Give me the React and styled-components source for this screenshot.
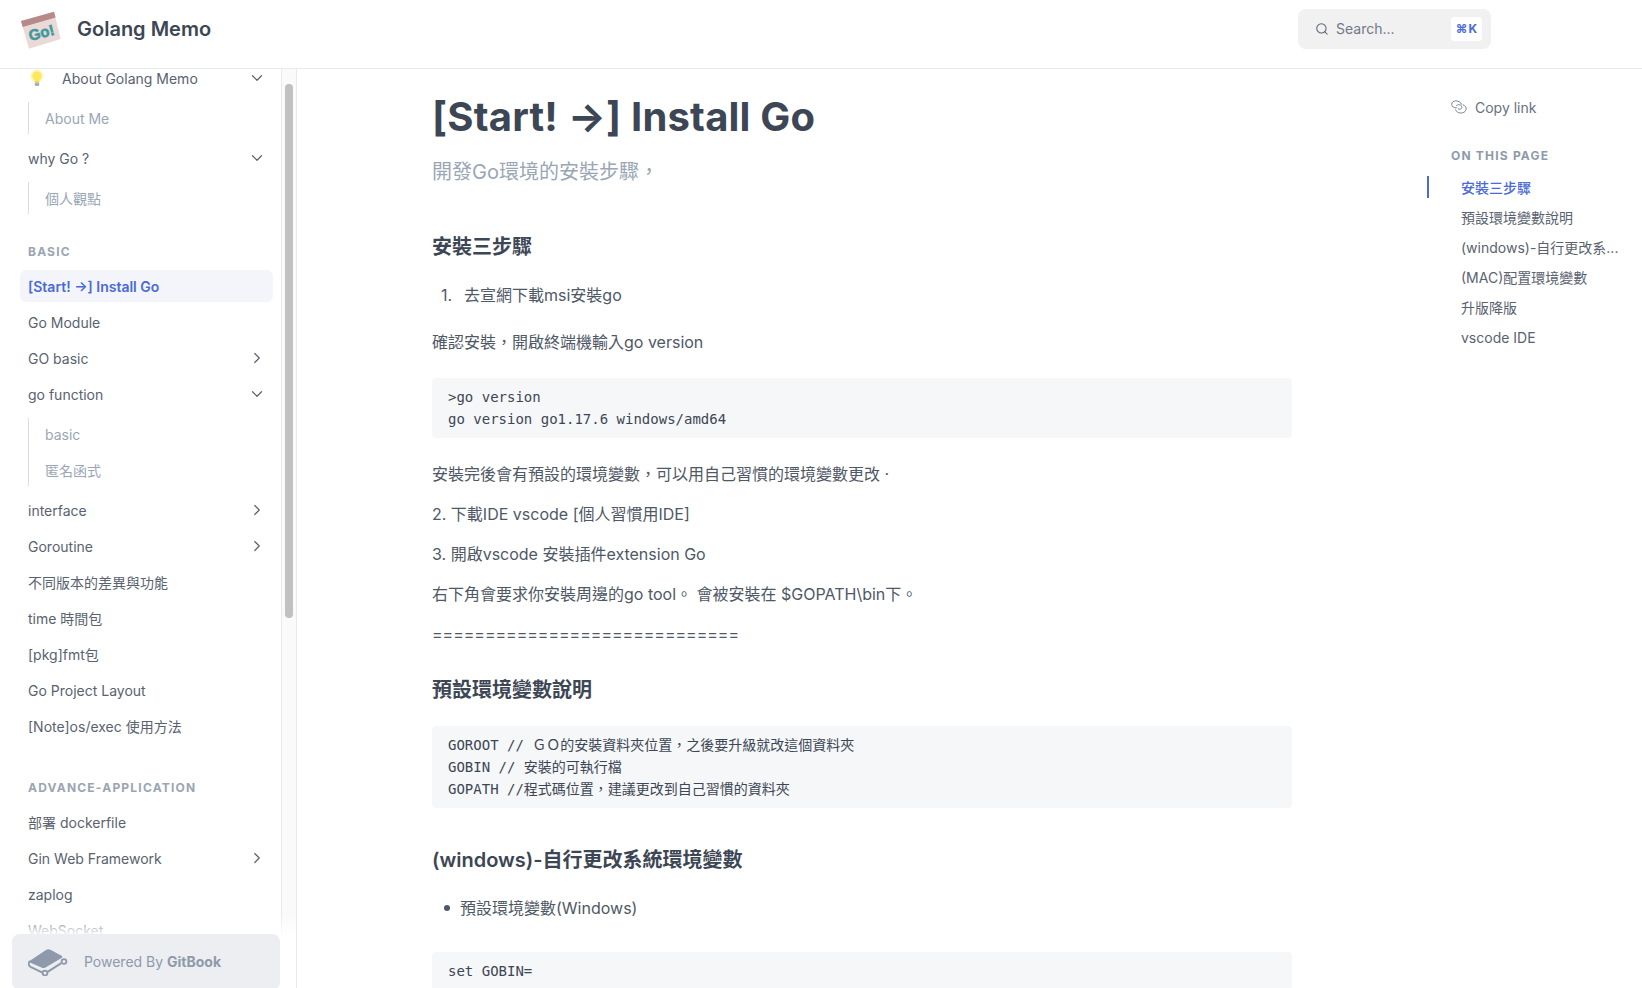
import React from 'react';
import styled, { createGlobalStyle } from 'styled-components';
import { ChevronDown, ChevronRight, Search as SearchIcon } from 'lucide-react';

const SANS = `Inter, "Noto Sans CJK TC", sans-serif`;
const MONO = `"DejaVu Sans Mono", "Noto Sans CJK TC", monospace`;

const Global = createGlobalStyle`
  html, body { margin: 0; height: 100%; overflow: hidden; background: #fff; }
  body { font-family: ${SANS}; color: #4f5866; }
  #root { height: 100%; }
`;

const Page = styled.div`
  display: flex;
  flex-direction: column;
  height: 988px;
  overflow: hidden;
`;

const Header = styled.header`
  flex: none;
  box-sizing: border-box;
  height: 69px;
  display: flex;
  align-items: center;
  padding: 0 151px 11px 20px;
  border-bottom: 1px solid #e6e9ef;
`;
const LogoBox = styled.svg`
  width: 41px;
  height: 40px;
  flex: none;
  overflow: visible;
`;
const SiteTitle = styled.div`
  margin-left: 16px;
  font-size: 20px;
  font-weight: 600;
  color: #3d4654;
`;
const SearchBox = styled.div`
  margin-left: auto;
  box-sizing: border-box;
  width: 193px;
  height: 40px;
  border-radius: 8px;
  background: #f1f1f2;
  display: flex;
  align-items: center;
  padding: 0 9px 0 17px;
  color: #6f7886;
  font-size: 14px;
`;
const SearchLabel = styled.span`
  margin-left: 7px;
  flex: 1;
`;
const Kbd = styled.span`
  width: 31px;
  height: 24px;
  border-radius: 4px;
  background: #fff;
  color: #4a6ad8;
  font-size: 12px;
  font-weight: 700;
  display: flex;
  align-items: center;
  justify-content: center;
  gap: 1px;
`;

const Body = styled.div`
  flex: 1;
  display: flex;
  min-height: 0;
`;

const Sidebar = styled.aside`
  position: relative;
  flex: none;
  width: 297px;
  display: flex;
  overflow: hidden;
  border-right: 1px solid #e6e9ef;
  box-sizing: border-box;
`;
const Nav = styled.nav`
  flex: none;
  box-sizing: border-box;
  width: 282px;
  padding: 0 8px 0 20px;
  border-right: 1px solid #e6e9ef;
  margin-top: -7px;
`;
const Track = styled.div`
  flex: 1;
  background: #fafafa;
  padding: 15px 3px 0;
`;
const Thumb = styled.div`
  height: 534px;
  border-radius: 4px;
  background: #c1c1c1;
`;
const Row = styled.div`
  height: 32px;
  box-sizing: border-box;
  border-radius: 6px;
  padding: 0 8px;
  margin-bottom: 4px;
  display: flex;
  align-items: center;
  font-size: 14px;
  color: ${p => (p.$active ? '#4a6ad8' : '#5a6270')};
  font-weight: ${p => (p.$active ? 600 : 400)};
  background: ${p => (p.$active ? '#f4f5fb' : 'transparent')};
`;
const RowLabel = styled.span`
  flex: 1;
  white-space: nowrap;
`;
const Chevron = styled.span`
  display: flex;
  margin-right: -1px;
  color: #5a6270;
`;
const Bulb = styled.svg`
  width: 16px;
  height: 18px;
  margin: 0 17px 0 1px;
  flex: none;
  overflow: visible;
`;
const Group = styled.div`
  margin: 8px 0 8px 8px;
  border-left: 1px solid #d6dde7;
  padding-left: 8px;
`;
const SubRow = styled(Row)`
  color: #9aa6b6;
  &:last-child { margin-bottom: 0; }
`;
const Section = styled.div`
  padding-bottom: 4px;
  &:first-child { padding-bottom: 0; }
`;
const SectionTitle = styled.div`
  margin: 28px 0 9px 8px;
  height: 19px;
  line-height: 19px;
  font-size: 12px;
  font-weight: 700;
  letter-spacing: 1.2px;
  color: #9aa5b4;
`;
const FooterFade = styled.div`
  position: absolute;
  left: 0;
  right: 0;
  bottom: 0;
  height: 74px;
  background: linear-gradient(to bottom, rgba(255,255,255,0), rgba(255,255,255,.9) 20px, #fff 30px);
  pointer-events: none;
`;
const Powered = styled.div`
  position: absolute;
  left: 12px;
  width: 268px;
  top: 20px;
  height: 56px;
  box-sizing: border-box;
  border-radius: 8px;
  background: #eceef1;
  display: flex;
  align-items: flex-start;
  padding: 14px 0 0 16px;
  color: #8e9aab;
  font-size: 14px;
`;
const BookIcon = styled.svg`
  width: 40px;
  height: 28px;
  flex: none;
`;
const PoweredText = styled.span`
  margin: 5px 0 0 16px;
  b { font-weight: 700; }
`;

const Main = styled.main`
  flex: 1;
  display: flex;
  min-width: 0;
  overflow: hidden;
`;
const Article = styled.article`
  flex: none;
  width: 860px;
  margin-left: 135px;
`;
const H1 = styled.h1`
  margin: 24px 0 0;
  font-size: 40px;
  line-height: 48px;
  font-weight: 700;
  letter-spacing: 0.2px;
  color: #3d4654;
`;
const Lead = styled.p`
  margin: 19px 0 0;
  font-size: 20px;
  line-height: 24px;
  color: #9aa6b6;
`;
const H2 = styled.h2`
  margin: ${p => p.$top}px 0 0;
  font-size: 20px;
  line-height: 32px;
  font-weight: 600;
  color: #3d4654;
`;
const P = styled.p`
  margin: ${p => p.$top ?? 16}px 0 0;
  font-size: 16px;
  line-height: 24px;
  color: #4f5866;
`;
const List = styled.div`
  margin: ${p => p.$top}px 0 0;
  font-size: 16px;
  line-height: 24px;
  color: #4f5866;
  display: flex;
  align-items: center;
`;
const NumberMark = styled.span`
  width: 32px;
  padding-left: 9px;
  box-sizing: border-box;
  flex: none;
`;
const Dot = styled.span`
  width: 6px;
  height: 6px;
  border-radius: 50%;
  background: #4f5866;
  margin: 0 10px 0 12px;
  flex: none;
`;
const Code = styled.pre`
  margin: ${p => p.$top}px 0 0;
  padding: 8px 16px;
  border-radius: 4px;
  background: #f5f7f9;
  font-family: ${MONO};
  font-size: 14px;
  line-height: 22px;
  color: #3d4654;
  white-space: pre;
  overflow: hidden;
`;

const Toc = styled.aside`
  flex: none;
  margin-left: 135px;
  width: 215px;
  padding-top: 27px;
`;
const CopyLink = styled.div`
  margin-left: 24px;
  display: flex;
  align-items: center;
  height: 22px;
  font-size: 14px;
  color: #68717f;
`;
const LinkIcon = styled.svg`
  width: 16px;
  height: 14px;
  margin-right: 8px;
  flex: none;
`;
const TocTitle = styled.div`
  margin: 28px 0 6px 24px;
  height: 20px;
  line-height: 20px;
  font-size: 12px;
  font-weight: 700;
  letter-spacing: 1.2px;
  color: #8e9aab;
`;
const TocItem = styled.div`
  box-sizing: border-box;
  height: 30px;
  display: flex;
  align-items: center;
  padding-left: 34px;
  font-size: 14px;
  color: ${p => (p.$active ? '#4a6ad8' : '#5a6270')};
  font-weight: ${p => (p.$active ? 500 : 400)};
  position: relative;
  &::before {
    content: '';
    display: ${p => (p.$active ? 'block' : 'none')};
    position: absolute;
    left: 0;
    top: 4px;
    bottom: 4px;
    width: 2px;
    background: #4a6ad8;
  }
`;
const TocText = styled.span`
  width: 175px;
  white-space: nowrap;
`;

const Logo = () => (
  <LogoBox viewBox="0 0 41 40" aria-hidden="true">
    <polygon points="1,12 34,2.7 40.7,30 9,39.7" fill="#ead9d6" />
    <polygon points="1,12 34,2.7 35.6,8.6 2.7,18" fill="#b58a88" />
    <text x="21.5" y="29" textAnchor="middle" fontFamily="Liberation Sans, sans-serif" fontSize="15" fontWeight="700" fill="#3f9a9c" stroke="#3f9a9c" strokeWidth=".6" transform="rotate(-15 21 24)">Go!</text>
  </LogoBox>
);

const BulbIcon = () => (
  <Bulb viewBox="0 -1 16 18" aria-hidden="true">
    <circle cx="8" cy="6" r="6.5" fill="#fdf6b8" />
    <circle cx="8" cy="6" r="4.6" fill="#fbe85c" />
    <rect x="5.6" y="10.5" width="4.8" height="2" fill="#f3d94a" />
    <rect x="5.8" y="12.5" width="4.4" height="3.5" rx="1" fill="#a9adb3" />
  </Bulb>
);

const Book = () => (
  <BookIcon viewBox="0 0 40 28" aria-hidden="true">
    <path d="M1.5 13 L18 2 Q20 .6 22.5 1.8 L34 8 Q35 9 33.5 10 L17.5 19.5 Q15.5 20.5 13.5 19.5 L2 14.5Z" fill="#8e9aab" />
    <path d="M1.6 13.5 Q-.6 17 2.5 18.8 L14 24.4" fill="none" stroke="#8e9aab" strokeWidth="2" strokeLinecap="round" />
    <path d="M20.4 23.4 L32.5 15.6" fill="none" stroke="#8e9aab" strokeWidth="2" strokeLinecap="round" />
    <circle cx="17" cy="25" r="2.4" fill="none" stroke="#8e9aab" strokeWidth="1.8" />
    <circle cx="36" cy="13.5" r="2.4" fill="none" stroke="#8e9aab" strokeWidth="1.8" />
  </BookIcon>
);

const Link = () => (
  <LinkIcon viewBox="0 0 16 14" aria-hidden="true" fill="none" stroke="#7b8594" strokeWidth="1" strokeLinecap="round">
    <path d="M5.5 7.8 C3 8.3 .8 6.6 .7 4.4 C.6 2.2 2.4 .9 4.6 .9 C7.4 .9 10 2.2 10.6 4.2" />
    <path d="M5.6 5.4 C8 3.6 11 5 10.8 7.4 C10.6 9.4 8.4 9.8 7.2 8.8" />
    <path d="M12.2 4.8 C14.4 5.4 15.6 7.6 15 9.8 C14.4 12 12 13.2 9.4 13 C7 12.8 5 11.6 4.6 9.8" />
  </LinkIcon>
);

const NavRow = ({ label, open, closed, active }) => (
  <Row $active={active}>
    <RowLabel>{label}</RowLabel>
    {open && <Chevron><ChevronDown size={18} strokeWidth={1.6} /></Chevron>}
    {closed && <Chevron><ChevronRight size={18} strokeWidth={1.6} /></Chevron>}
  </Row>
);

export default function App() {
  return (
    <Page>
      <Global />
      <Header>
        <Logo />
        <SiteTitle>Golang Memo</SiteTitle>
        <SearchBox>
          <SearchIcon size={14} strokeWidth={1.8} color="#5a6270" />
          <SearchLabel>Search...</SearchLabel>
          <Kbd><span>⌘</span><span>K</span></Kbd>
        </SearchBox>
      </Header>
      <Body>
        <Sidebar>
          <Nav>
            <Section>
              <Row>
                <BulbIcon />
                <RowLabel>About Golang Memo</RowLabel>
                <Chevron><ChevronDown size={18} strokeWidth={1.6} /></Chevron>
              </Row>
              <Group><SubRow>About Me</SubRow></Group>
              <NavRow label="why Go ?" open />
              <Group><SubRow>個人觀點</SubRow></Group>
            </Section>
            <Section>
              <SectionTitle>BASIC</SectionTitle>
              <NavRow label="[Start! →] Install Go" active />
              <NavRow label="Go Module" />
              <NavRow label="GO basic" closed />
              <NavRow label="go function" open />
              <Group>
                <SubRow>basic</SubRow>
                <SubRow>匿名函式</SubRow>
              </Group>
              <NavRow label="interface" closed />
              <NavRow label="Goroutine" closed />
              <NavRow label="不同版本的差異與功能" />
              <NavRow label="time 時間包" />
              <NavRow label="[pkg]fmt包" />
              <NavRow label="Go Project Layout" />
              <NavRow label="[Note]os/exec 使用方法" />
            </Section>
            <Section>
              <SectionTitle>ADVANCE-APPLICATION</SectionTitle>
              <NavRow label="部署 dockerfile" />
              <NavRow label="Gin Web Framework" closed />
              <NavRow label="zaplog" />
              <NavRow label="WebSocket" />
            </Section>
          </Nav>
          <Track><Thumb /></Track>
          <FooterFade>
            <Powered>
              <Book />
              <PoweredText>Powered By <b>GitBook</b></PoweredText>
            </Powered>
          </FooterFade>
        </Sidebar>
        <Main>
          <Article>
            <H1>[Start! →] Install Go</H1>
            <Lead>開發Go環境的安裝步驟，</Lead>
            <H2 $top={47}>安裝三步驟</H2>
            <List $top={20}><NumberMark>1.</NumberMark>去宣網下載msi安裝go</List>
            <P $top={23}>確認安裝，開啟終端機輸入go version</P>
            <Code $top={24}>{`>go version\ngo version go1.17.6 windows/amd64`}</Code>
            <P $top={24}>安裝完後會有預設的環境變數，可以用自己習慣的環境變數更改 ·</P>
            <P>2. 下載IDE vscode [個人習慣用IDE]</P>
            <P>3. 開啟vscode 安裝插件extension Go</P>
            <P>右下角會要求你安裝周邊的go tool。 會被安裝在 $GOPATH\bin下。</P>
            <P>=============================</P>
            <H2 $top={28}>預設環境變數說明</H2>
            <Code $top={20}>{`GOROOT // ＧＯ的安裝資料夾位置，之後要升級就改這個資料夾\nGOBIN // 安裝的可執行檔\nGOPATH //程式碼位置，建議更改到自己習慣的資料夾`}</Code>
            <H2 $top={36}>(windows)-自行更改系統環境變數</H2>
            <List $top={20}><Dot />預設環境變數(Windows)</List>
            <Code $top={32}>{`set GOBIN=`}</Code>
          </Article>
          <Toc>
            <CopyLink><Link />Copy link</CopyLink>
            <TocTitle>ON THIS PAGE</TocTitle>
            <TocItem $active><TocText>安裝三步驟</TocText></TocItem>
            <TocItem><TocText>預設環境變數說明</TocText></TocItem>
            <TocItem><TocText>(windows)-自行更改系...</TocText></TocItem>
            <TocItem><TocText>(MAC)配置環境變數</TocText></TocItem>
            <TocItem><TocText>升版降版</TocText></TocItem>
            <TocItem><TocText>vscode IDE</TocText></TocItem>
          </Toc>
        </Main>
      </Body>
    </Page>
  );
}
